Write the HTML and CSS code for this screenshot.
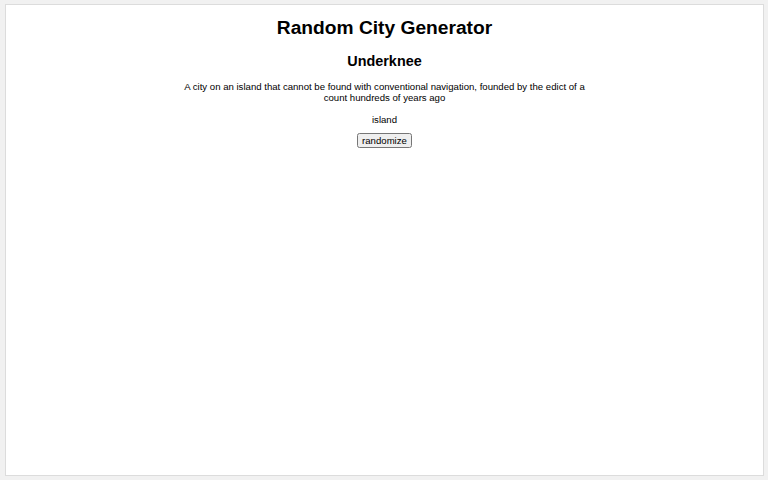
FILE: index.html
```html
<!DOCTYPE html>
<html lang="en">
<head>
  <meta charset="UTF-8" />
  <meta name="viewport" content="width=device-width, initial-scale=1.0" />
  <title>Random City Generator</title>
  <link rel="stylesheet" href="styles.css">
</head>
<body>
  <main class="page">
    <h1>Random City Generator</h1>
    <h2 class="city-name">Underknee</h2>
    <p class="city-desc">A city on an island that cannot be found with conventional navigation, founded by the edict of a count hundreds of years ago</p>
    <p class="city-type">island</p>
    <button type="button" class="randomize">randomize</button>
  </main>
</body>
</html>
```

FILE: styles.css
```css
html, body {
  height: 100%;
}
body {
  font-family: 'Liberation Sans', Arial, sans-serif;
  background: #f1f1f1;
  margin: 0;
  padding: 4px 4px 4px 5px;
  box-sizing: border-box;
}
.page {
  height: 100%;
  box-sizing: border-box;
  background: #fff;
  border: 1px solid #dcdcdc;
  display: flex;
  flex-direction: column;
  align-items: center;
  text-align: center;
  padding-top: 12px;
}
h1 {
  margin: 0;
  font-size: 19.2px;
}
.city-name {
  margin: 13.5px 0 0;
  font-size: 14.4px;
}
.city-desc {
  max-width: 402px;
  margin: 12px 0 0;
  font-size: 9.6px;
}
.city-type {
  margin: 11px 0 0;
  font-size: 9.6px;
}
.randomize {
  margin-top: 8.5px;
  font-family: 'Liberation Sans', Arial, sans-serif;
  font-size: 9.6px;
  height: 15px;
  padding: 0 3px;
  box-sizing: border-box;
}
```
